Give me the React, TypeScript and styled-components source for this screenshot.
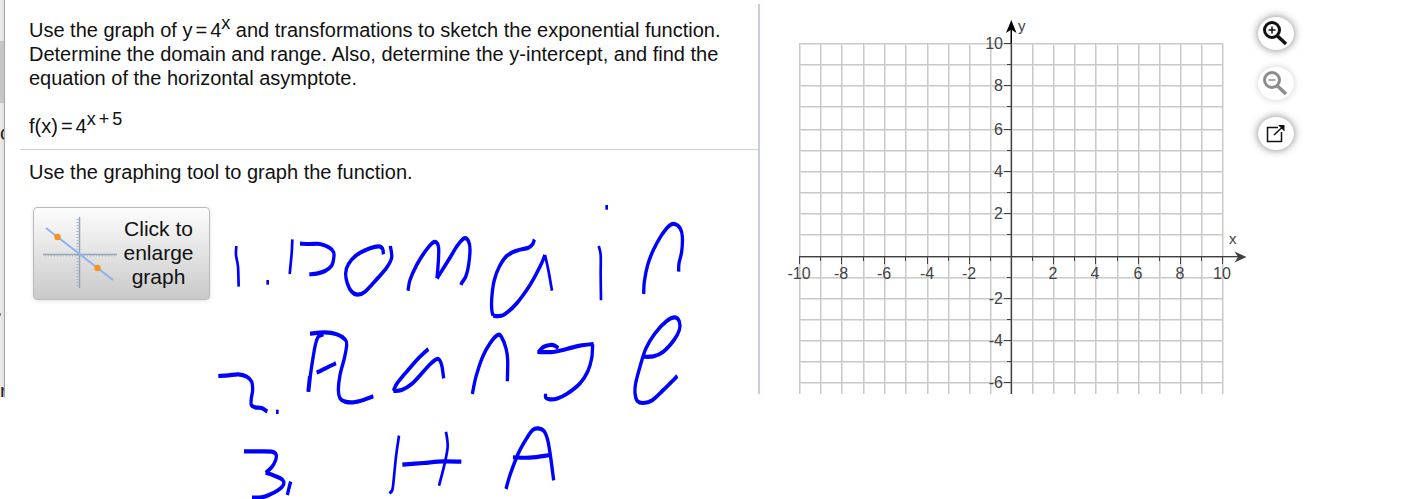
import React from "react";
import styled, { createGlobalStyle, css } from "styled-components";

const GlobalStyle = createGlobalStyle`
  * { box-sizing: border-box; }
  body {
    margin: 0;
    background: #fff;
    color: #111;
    font: 20px/24px "Liberation Sans", Arial, sans-serif;
  }
`;

const Page = styled.div`
  position: relative;
  display: grid;
  grid-template-columns: 5px minmax(0, 755fr) minmax(0, 667fr);
  align-items: start;
  min-height: 100vh;
  overflow: hidden;
`;

const Strip = styled.aside`
  display: flex;
  flex-direction: column;
  height: 397px;
  padding-top: 41px;
  overflow: hidden;
  background: linear-gradient(to right, #ececec, #dfdfdf);
  border-right: 1px solid #a6a6a6;
`;

const StripThumb = styled.div`
  flex: none;
  height: 62px;
  margin-bottom: 18px;
  background: #c6c6c6;
`;

const StripText = styled.span`
  flex: none;
  height: 24px;
  color: #222;
  white-space: nowrap;
`;

const StripMark = styled.div`
  flex: none;
  width: 1px;
  height: 3px;
  margin: 168px 0 63px;
  background: #888;
`;

const Exercise = styled.main`
  height: 390px;
  margin-top: 4px;
  padding: 14px 0 0 15px;
  border-right: 2px solid #c9cddc;
`;

const Prompt = styled.section`
  padding: 0 0 11px 9px;
  border-bottom: 1px solid #c9cddc;
`;

const Paragraph = styled.p<{ $gap?: number }>`
  max-width: 700px;
  margin: 0 0 ${(p) => p.$gap ?? 0}px;
`;

const Sup = styled.sup`
  font-size: 18px;
  line-height: 0;
  vertical-align: 8px;
`;

const Op = styled.span`
  margin: 0 3px;
`;

const Task = styled.section`
  padding: 10px 0 0 9px;
`;

const EnlargeButton = styled.button`
  display: flex;
  align-items: center;
  gap: 6px;
  width: 177px;
  height: 93px;
  margin-left: 4px;
  padding: 0 15px 2px 9px;
  border: 1px solid #bababa;
  border-radius: 4px;
  background: linear-gradient(#fdfdfd, #c9c9c9);
  box-shadow: 0 1px 4px rgba(0, 0, 0, 0.12);
  color: #111;
  font: inherit;
  text-align: center;
`;

const ButtonText = styled.span`
  flex: 1;
  font-size: 21px;
`;

const GraphPane = styled.section`
  display: flex;
  align-items: flex-start;
  padding-left: 20px;
`;

const Graph = styled.svg`
  display: block;
  flex: 0 1 478px;
  min-width: 0;
  font: 16px "Liberation Sans", Arial, sans-serif;
  fill: #444;
`;

const Tools = styled.nav`
  display: flex;
  flex-direction: column;
  gap: 17px;
  padding-top: 17px;
`;

const ToolButton = styled.button<{ $muted?: boolean }>`
  display: grid;
  place-items: center;
  width: 36px;
  height: 33px;
  padding: 0;
  border: 0;
  border-radius: 50%;
  background: #fff;
  color: #111;
  box-shadow: 0 0 8px rgba(0, 0, 0, 0.5);
  ${(p) =>
    p.$muted &&
    css`
      color: #8c8c8c;
      box-shadow: 0 0 7px rgba(0, 0, 0, 0.2);
    `}
`;

const Ink = styled.svg`
  position: absolute;
  top: 200px;
  left: 210px;
  pointer-events: none;
  fill: none;
  stroke: #00f;
  stroke-linejoin: round;
`;

/* ---- Graph ---- */

const xLines = [799, 820, 841, 863, 884, 905, 927, 948, 969, 990, 1011, 1032, 1053, 1074, 1095, 1117, 1138, 1159, 1180, 1201, 1222];
const yLines = [43, 64, 85, 106, 129, 150, 171, 192, 213, 234, 256, 277, 298, 319, 340, 361, 382];

function CoordinateGrid() {
  return (
    <Graph width="478" height="394" viewBox="780 0 478 394" role="img" aria-label="Coordinate grid">
      <g fill="#c9c9c9">
        {xLines.map((x) => (
          <rect key={x} x={x} y="43" width="1" height="351" />
        ))}
        {yLines.map((y) => (
          <rect key={y} x="799" y={y} width="424" height="1" />
        ))}
      </g>
      <g fill="#c9c9c9" opacity="0.5">
        {xLines.map((x) => (
          <rect key={x} x={x + 1} y="44" width="1" height="350" />
        ))}
        {yLines.map((y) => (
          <rect key={y} x="800" y={y + 1} width="423" height="1" />
        ))}
      </g>
      <g fill="#404040">
        <rect x="799" y="256" width="440" height="1" />
        <rect x="799" y="257" width="440" height="1" opacity="0.35" />
        <rect x="1011" y="43" width="1" height="351" />
        <rect x="1010" y="43" width="1" height="351" opacity="0.4" />
        {xLines.map((x, i) => i !== 10 && <rect key={x} x={x} y="257" width="1" height={i % 2 ? 4 : 7} />)}
        {yLines.map((y, i) =>
          i !== 10 && <rect key={y} x={i % 2 ? 1007 : 1004} y={y} width={i % 2 ? 4 : 7} height="1" />
        )}
        <path d="M1246.5 257 1234.5 251.5 1238 257 1234.5 262.5Z" />
      </g>
      <path d="M1011.3 20 1006 33 1010.5 30V43H1012V30L1016.5 33Z" fill="#000" />
      {xLines.map((x, i) =>
        i % 2 === 0 && i !== 10 ? (
          <text key={x} x={x} y="279" textAnchor="middle">{i - 10}</text>
        ) : null
      )}
      {yLines.map((y, i) =>
        i % 2 === 0 && i !== 10 ? (
          <text key={y} x="1003" y={y + 6} textAnchor="end">{10 - i}</text>
        ) : null
      )}
      <text x="1018" y="31" fontSize="15">y</text>
      <text x="1229" y="244" fontSize="15">x</text>
    </Graph>
  );
}

function ThumbnailGraph() {
  return (
    <svg width="74" height="72" viewBox="0 0 74 72" aria-hidden="true">
      <path d="M36.5 0V71M0 37.5H74" stroke="#93a3b8" strokeWidth="1.5" />
      <path d="M34.5 2V70M2 38.5H72" stroke="#a9b5c4" strokeWidth="2" strokeDasharray="1 2" />
      <path d="M3 11 70 63" stroke="#8fb2f0" strokeWidth="2" />
      <circle cx="14.500" cy="20" r="3.200" fill="#f7931e" />
      <circle cx="54.500" cy="51" r="3.200" fill="#f7931e" />
    </svg>
  );
}

function Magnifier({ plus }: { plus?: boolean }) {
  return (
    <svg width="36" height="33" viewBox="0 0 36 33" fill="none" stroke="currentColor" aria-hidden="true">
      <circle cx="14" cy="13" r="7.500" strokeWidth="3" />
      <path d="M19.500 19 28 27" strokeWidth="3.400" />
      <path d={plus ? "M10.500 13h7M14 9.500v7" : "M10.500 13h7"} strokeWidth="1.500" />
    </svg>
  );
}

function OpenExternal() {
  return (
    <svg width="36" height="33" viewBox="0 0 36 33" fill="none" stroke="currentColor" aria-hidden="true">
      <path d="M20 10.500H9.500V24.500H23.500V15" strokeWidth="1.500" />
      <path d="M16 18 25 9.500" strokeWidth="1.500" />
      <path d="M20 8H26.500V14.500Z" fill="currentColor" stroke="none" />
    </svg>
  );
}

/* ---- Handwriting: pen strokes as x,y points, three units to a pixel; "~" marks a light stroke ---- */

type Word = { x: number; y: number; strokes: string[] };

const words: Word[] = [
  {
    x: 210, y: 195,
    strokes: [
      "~79,153 78,180 84,215 86,275",
      "~173,255 173,269",
      "~247,133 245,175 239,237",
      "270,146 300,147 330,147 358,158 371,172 371,190 365,212 345,228 320,236 298,238",
      "520,178 518,162 507,154 480,160 440,180 415,208 407,235 412,265 425,290 443,299 465,290 500,253 530,218 545,188 541,153",
      "594,287 600,255 620,210 645,170 668,143 680,143 686,160 685,200 681,250",
      "681,250 695,228 720,188 742,152 763,130 776,140 780,165 775,215 767,245 755,264 753,270",
    ],
  },
  {
    x: 450, y: 195,
    strokes: [
      "253,133 248,147 235,158 200,167 170,183 148,215 133,255 126,300 125,340 129,362",
      "129,362 148,363 165,357 200,325 240,270 270,215 285,180",
      "~285,180 295,225 306,287",
      "~446,153 452,180 452,240 453,316",
      "~470,30 470,44",
      "581,297 583,260 593,210 610,165 635,120 658,92 674,87 690,99 697,125 695,170 687,205 686,230",
    ],
  },
  {
    x: 210, y: 310,
    strokes: [
      "25,198 55,196 85,193 110,200 125,215 128,240 124,265 124,285 135,292 155,294 172,305",
      "~202,299 202,312",
      "300,71 345,67 380,73 405,88 410,105 403,145 390,195 385,240 390,265 405,275 430,277 460,270 490,259",
      "340,73 325,80 316,105 308,150 302,190 296,245",
      "299,198 294,245",
      "320,188 350,173 378,160",
      "655,117 625,145 590,185 560,222 550,243",
      "550,243 575,240 605,222 640,185 665,158 685,147 695,165 701,205",
      "102,424 150,424 185,425 198,433 197,450 185,472 167,488",
      "167,488 195,498 218,510 220,525 205,540 175,556 155,562 126,563",
      "242,515 238,530 232,555",
      "~567,377 558,440 551,510 547,540 538,550",
      "~708,365 713,410 703,465 687,527",
      "577,464 640,459 700,454 754,455",
    ],
  },
  {
    x: 450, y: 305,
    strokes: [
      "67,267 78,215 98,155 120,115 143,90 155,97 168,130 173,165 172,229",
      "325,130 315,122 300,120 280,126 267,139",
      "262,141 310,141 350,132 390,122 431,117",
      "428,118 425,160 413,200 390,235 350,267 320,281 300,283 287,278 287,266",
      "578,155 610,154 640,140 672,105 688,75 688,50 675,37 650,48 615,85 588,130 570,185 557,235 555,265 562,288 580,294 605,287 640,255 682,213",
      "168,552 180,510 205,445 230,400 248,375 265,370 282,378 293,405 301,450 311,526",
      "189,457 240,458 300,450",
    ],
  },
];

// The nib is taller than it is wide: strokes are drawn in a space stretched along y.
const SCALE_X = 1 / 3;
const SCALE_Y = 0.42;

function smoothPath(stroke: string) {
  const pts = stroke.split(" ").map((pair) => {
    const [x, y] = pair.split(",").map(Number);
    return [x, (y * SCALE_X) / SCALE_Y];
  });
  let d = `M${pts[0]}`;
  for (let i = 0; i < pts.length - 1; i++) {
    const a = pts[Math.max(i - 1, 0)];
    const b = pts[i];
    const c = pts[i + 1];
    const e = pts[Math.min(i + 2, pts.length - 1)];
    d += `C${b[0] + (c[0] - a[0]) / 6} ${b[1] + (c[1] - a[1]) / 6} ${c[0] - (e[0] - b[0]) / 6} ${c[1] - (e[1] - b[1]) / 6} ${c[0]} ${c[1]}`;
  }
  return d;
}

function Handwriting() {
  return (
    <Ink width="490" height="299" viewBox="210 200 490 299" role="img" aria-label="1. Domain 2. Range 3. HA">
      {words.map((w) => (
        <g key={`${w.x}-${w.y}`} transform={`translate(${w.x} ${w.y}) scale(${SCALE_X} ${SCALE_Y})`}>
          {w.strokes.map((s) => (
            <path key={s} d={smoothPath(s.replace("~", ""))} strokeWidth={s.startsWith("~") ? 8 : 10} />
          ))}
        </g>
      ))}
    </Ink>
  );
}

export default function App() {
  return (
    <>
      <GlobalStyle />
      <Page>
        <Strip>
          <StripThumb />
          <StripText>c</StripText>
          <StripMark />
          <StripText>r</StripText>
        </Strip>
        <Exercise>
          <Prompt>
            <Paragraph $gap={24}>
              Use the graph of y<Op>=</Op>4<Sup>x</Sup> and transformations to sketch the exponential function.
              Determine the domain and range. Also, determine the y-intercept, and find the equation of the
              horizontal asymptote.
            </Paragraph>
            <Paragraph>
              f(x)<Op>=</Op>4<Sup>x<Op>+</Op>5</Sup>
            </Paragraph>
          </Prompt>
          <Task>
            <Paragraph $gap={23}>Use the graphing tool to graph the function.</Paragraph>
            <EnlargeButton type="button">
              <ThumbnailGraph />
              <ButtonText>Click to enlarge graph</ButtonText>
            </EnlargeButton>
          </Task>
        </Exercise>
        <GraphPane>
          <CoordinateGrid />
          <Tools aria-label="Graph tools">
            <ToolButton type="button" aria-label="Zoom in">
              <Magnifier plus />
            </ToolButton>
            <ToolButton type="button" aria-label="Zoom out" $muted>
              <Magnifier />
            </ToolButton>
            <ToolButton type="button" aria-label="Open in new window">
              <OpenExternal />
            </ToolButton>
          </Tools>
        </GraphPane>
        <Handwriting />
      </Page>
    </>
  );
}
